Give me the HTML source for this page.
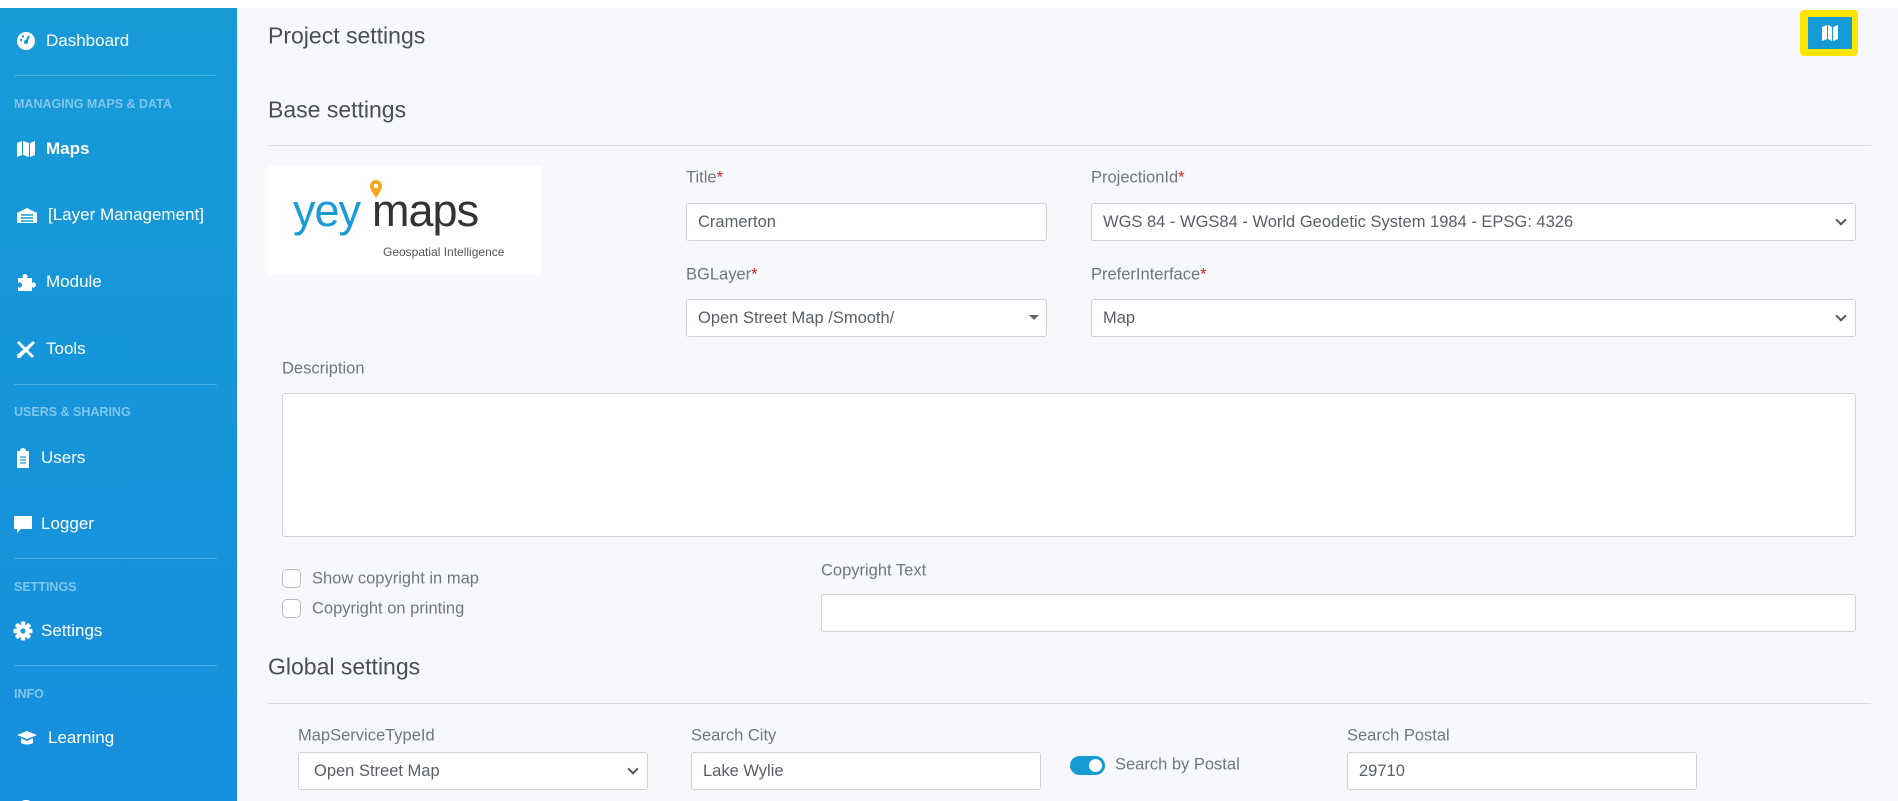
<!DOCTYPE html>
<html><head><meta charset="utf-8"><style>
*{box-sizing:border-box;margin:0;padding:0}
html,body{width:1898px;height:801px;overflow:hidden}
body{background:#f6f8fb;font-family:"Liberation Sans",sans-serif;position:relative;color:#5a5f66}
.a{position:absolute}
#top{left:0;top:0;width:1898px;height:8px;background:#fff}
#side{left:0;top:8px;width:237px;height:793px;background:linear-gradient(180deg,#179bd7 0%,#168fdd 100%);overflow:hidden}
.it{position:absolute;left:16px;color:#fff;font-size:17px;display:flex;align-items:center;gap:10px;transform:translateY(-50%)}
.it svg{width:20px;height:20px;fill:#fff}
.sec{position:absolute;left:14px;color:#7fc6ec;font-size:12.5px;font-weight:bold;transform:translateY(-50%)}
.dv{position:absolute;left:14px;width:203px;height:1px;background:#47b0e2}
.h{color:#4a4f55;font-size:23px;transform:translateY(-50%)}
.lb{font-size:16.5px;color:#707780;transform:translateY(-50%)}
.st{color:#e02020}
.in{background:#fff;border:1px solid #cfd2dc;border-radius:3px;font-size:16.5px;color:#5a5f66;display:flex;align-items:center;padding-left:11px}
.hr{height:1px;background:#dcdee3}
.chev{position:absolute;right:10px;top:50%;width:8px;height:8px;border-right:2px solid #555;border-bottom:2px solid #555;transform:translateY(-75%) rotate(45deg)}
.cb{width:19px;height:19px;border:1px solid #b9bcc4;border-radius:5px;background:#fff}
</style></head><body>
<div class="a" id="top"></div>
<div class="a" id="side">
<div class="it" style="top:33px"><svg viewBox="0 0 20 20"><circle cx="10" cy="10" r="9"/><path d="M10 11 L13 5" stroke="#179bd7" stroke-width="2"/><circle cx="10" cy="11" r="2" fill="#179bd7"/><circle cx="5" cy="9" r="1.2" fill="#179bd7"/><circle cx="7" cy="5.5" r="1.2" fill="#179bd7"/></svg>Dashboard</div>
<div class="dv" style="top:67px"></div>
<div class="sec" style="top:96px">MANAGING MAPS &amp; DATA</div>
<div class="it" style="top:141px;font-weight:bold"><svg viewBox="0 0 20 20"><path d="M1 4 L6 2 L6 16 L1 18Z M7 2 L13 4 L13 18 L7 16Z M14 4 L19 2 L19 16 L14 18Z"/></svg>Maps</div>
<div class="it" style="top:207px"><svg viewBox="0 0 20 20" style="width:22px"><path d="M0 8 L10 3 L20 8 L20 18 L0 18Z"/><path d="M4 10h12M4 13h12M4 16h12" stroke="#179bd7" stroke-width="1.5"/></svg>[Layer Management]</div>
<div class="it" style="top:274px"><svg viewBox="0 0 20 20"><path d="M2 6h5a2.5 2.5 0 1 1 4 0h5v5a2.5 2.5 0 1 1 0 4v4H2v-4a2.5 2.5 0 1 0 0-4z"/></svg>Module</div>
<div class="it" style="top:341px"><svg viewBox="0 0 20 20"><path d="M3 2 L18 17 L16 19 L1 4Z M17 2 L19 4 L4 19 L1 19 L1 16Z"/></svg>Tools</div>
<div class="dv" style="top:376px"></div>
<div class="sec" style="top:404px">USERS &amp; SHARING</div>
<div class="it" style="top:450px;left:13px;gap:8px"><svg viewBox="0 0 20 20"><path d="M4 3h3a3 3 0 0 1 6 0h3v17H4z"/><path d="M7 9h6M7 12h6M7 15h6" stroke="#179bd7" stroke-width="1.3"/></svg>Users</div>
<div class="it" style="top:516px;left:13px;gap:8px"><svg viewBox="0 0 20 20"><path d="M1 2h18v13H8l-4 4v-4H1z"/></svg>Logger</div>
<div class="dv" style="top:550px"></div>
<div class="sec" style="top:579px">SETTINGS</div>
<div class="it" style="top:623px;left:13px;gap:8px"><svg viewBox="0 0 20 20"><g transform="translate(10 10)"><rect x="-2.2" y="-9.5" width="4.4" height="19" rx="1"/><rect x="-2.2" y="-9.5" width="4.4" height="19" rx="1" transform="rotate(45)"/><rect x="-2.2" y="-9.5" width="4.4" height="19" rx="1" transform="rotate(90)"/><rect x="-2.2" y="-9.5" width="4.4" height="19" rx="1" transform="rotate(135)"/><circle r="6.5"/><circle r="2.6" fill="#179bd7"/></g></svg>Settings</div>
<div class="dv" style="top:657px"></div>
<div class="sec" style="top:686px">INFO</div>
<div class="it" style="top:730px"><svg viewBox="0 0 20 20" style="width:22px"><path d="M0 7 L10 3 L20 7 L10 11Z M4 10v5c3 2 9 2 12 0v-5l-6 3z"/></svg>Learning</div>
<div class="it" style="top:801px"><svg viewBox="0 0 20 20"><circle cx="10" cy="10" r="9"/></svg>Help</div>
</div>

<div class="a h" style="left:268px;top:36px">Project settings</div>
<div class="a" style="left:1800px;top:10px;width:58px;height:46px;background:#ffe500;border-radius:4px"></div>
<div class="a" style="left:1808px;top:17px;width:44px;height:32px;background:#179bd7"><svg viewBox="0 0 20 20" width="20" height="20" style="position:absolute;left:12px;top:6px"><path d="M2 4 L7 2 L7 16 L2 18Z M8 2 L12 4 L12 18 L8 16Z M13 4 L18 2 L18 16 L13 18Z" fill="#fff"/></svg></div>

<div class="a h" style="left:268px;top:110px">Base settings</div>
<div class="a hr" style="left:268px;top:145px;width:1603px"></div>
<div class="a" style="left:268px;top:166px;width:273px;height:109px;background:#fff">
 <div class="a" style="left:25px;top:22px;font-size:45px;letter-spacing:-1px;line-height:45px"><span style="color:#1a9ad6">yey</span><span style="color:#333;margin-left:12px">maps</span></div>
 <svg class="a" style="left:102px;top:14px" width="12" height="20" viewBox="0 0 12 20"><path d="M6 0a6 6 0 0 1 6 6c0 4-6 12-6 12S0 10 0 6a6 6 0 0 1 6-6z" fill="#f6a81c"/><circle cx="6" cy="6" r="2.3" fill="#fff"/></svg>
 <div class="a" style="left:115px;top:79px;font-size:12px;color:#555">Geospatial Intelligence</div>
</div>

<div class="a lb" style="left:686px;top:178px">Title<span class="st">*</span></div>
<div class="a in" style="left:686px;top:203px;width:361px;height:38px">Cramerton</div>
<div class="a lb" style="left:1091px;top:178px">ProjectionId<span class="st">*</span></div>
<div class="a in" style="left:1091px;top:203px;width:765px;height:38px">WGS 84 - WGS84 - World Geodetic System 1984 - EPSG: 4326<span class="chev"></span></div>
<div class="a lb" style="left:686px;top:275px">BGLayer<span class="st">*</span></div>
<div class="a in" style="left:686px;top:299px;width:361px;height:38px">Open Street Map /Smooth/<span style="position:absolute;right:7px;top:15px;border-left:5px solid transparent;border-right:5px solid transparent;border-top:5px solid #666"></span></div>
<div class="a lb" style="left:1091px;top:275px">PreferInterface<span class="st">*</span></div>
<div class="a in" style="left:1091px;top:299px;width:765px;height:38px">Map<span class="chev"></span></div>

<div class="a lb" style="left:282px;top:369px">Description</div>
<div class="a in" style="left:282px;top:393px;width:1574px;height:144px"></div>

<div class="a cb" style="left:282px;top:569px"></div>
<div class="a lb" style="left:312px;top:579px">Show copyright in map</div>
<div class="a cb" style="left:282px;top:599px"></div>
<div class="a lb" style="left:312px;top:609px">Copyright on printing</div>
<div class="a lb" style="left:821px;top:571px">Copyright Text</div>
<div class="a in" style="left:821px;top:594px;width:1035px;height:38px"></div>

<div class="a h" style="left:268px;top:667px">Global settings</div>
<div class="a hr" style="left:268px;top:703px;width:1603px"></div>
<div class="a lb" style="left:298px;top:736px">MapServiceTypeId</div>
<div class="a in" style="left:298px;top:752px;width:350px;height:38px;padding-left:15px">Open Street Map<span class="chev"></span></div>
<div class="a lb" style="left:691px;top:736px">Search City</div>
<div class="a in" style="left:691px;top:752px;width:350px;height:38px">Lake Wylie</div>
<div class="a" style="left:1070px;top:756px;width:35px;height:19px;border-radius:10px;background:#179bd7"><div class="a" style="right:3px;top:3px;width:13px;height:13px;border-radius:50%;background:#fff"></div></div>
<div class="a lb" style="left:1115px;top:765px">Search by Postal</div>
<div class="a lb" style="left:1347px;top:736px">Search Postal</div>
<div class="a in" style="left:1347px;top:752px;width:350px;height:38px">29710</div>
</body></html>
